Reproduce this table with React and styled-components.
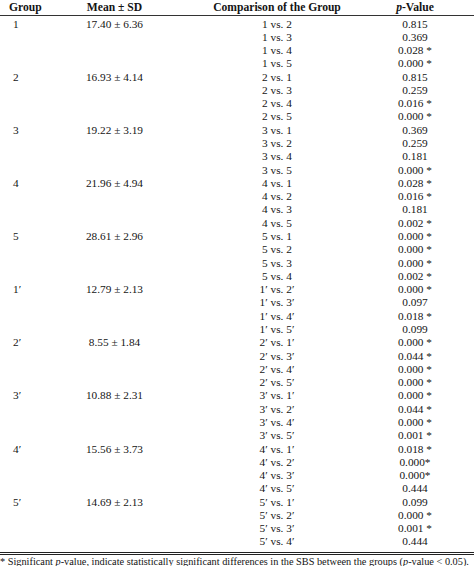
import styled, { createGlobalStyle } from 'styled-components';

const GlobalStyle = createGlobalStyle`
  html, body {
    margin: 0;
    padding: 0;
    background: #ffffff;
  }
  body {
    font-family: "Liberation Serif", "Times New Roman", serif;
    color: #141414;
  }
`;

const groups = [
  { id: '1', mean: '17.40 ± 6.36', rows: [['1 vs. 2', '0.815'], ['1 vs. 3', '0.369'], ['1 vs. 4', '0.028 *'], ['1 vs. 5', '0.000 *']] },
  { id: '2', mean: '16.93 ± 4.14', rows: [['2 vs. 1', '0.815'], ['2 vs. 3', '0.259'], ['2 vs. 4', '0.016 *'], ['2 vs. 5', '0.000 *']] },
  { id: '3', mean: '19.22 ± 3.19', rows: [['3 vs. 1', '0.369'], ['3 vs. 2', '0.259'], ['3 vs. 4', '0.181'], ['3 vs. 5', '0.000 *']] },
  { id: '4', mean: '21.96 ± 4.94', rows: [['4 vs. 1', '0.028 *'], ['4 vs. 2', '0.016 *'], ['4 vs. 3', '0.181'], ['4 vs. 5', '0.002 *']] },
  { id: '5', mean: '28.61 ± 2.96', rows: [['5 vs. 1', '0.000 *'], ['5 vs. 2', '0.000 *'], ['5 vs. 3', '0.000 *'], ['5 vs. 4', '0.002 *']] },
  { id: '1′', mean: '12.79 ± 2.13', rows: [['1′ vs. 2′', '0.000 *'], ['1′ vs. 3′', '0.097'], ['1′ vs. 4′', '0.018 *'], ['1′ vs. 5′', '0.099']] },
  { id: '2′', mean: '8.55 ± 1.84', rows: [['2′ vs. 1′', '0.000 *'], ['2′ vs. 3′', '0.044 *'], ['2′ vs. 4′', '0.000 *'], ['2′ vs. 5′', '0.000 *']] },
  { id: '3′', mean: '10.88 ± 2.31', rows: [['3′ vs. 1′', '0.000 *'], ['3′ vs. 2′', '0.044 *'], ['3′ vs. 4′', '0.000 *'], ['3′ vs. 5′', '0.001 *']] },
  { id: '4′', mean: '15.56 ± 3.73', rows: [['4′ vs. 1′', '0.018 *'], ['4′ vs. 2′', '0.000*'], ['4′ vs. 3′', '0.000*'], ['4′ vs. 5′', '0.444']] },
  { id: '5′', mean: '14.69 ± 2.13', rows: [['5′ vs. 1′', '0.099'], ['5′ vs. 2′', '0.000 *'], ['5′ vs. 3′', '0.001 *'], ['5′ vs. 4′', '0.444']] },
];

// Page

const Page = styled.div`
  width: 474px;
  height: 566px;
  overflow: hidden;
  display: flex;
  flex-direction: column;
`;

// Table rows

const TableRow = styled.div`
  display: grid;
  grid-template-columns: 58px 113px 212px 64px;
  padding-right: 27px;
  font-size: 11.3px;
  line-height: 13.28px;
  white-space: nowrap;
`;

const HeadRow = styled(TableRow)`
  height: 16px;
  line-height: 15px;
  font-size: 11.6px;
  font-weight: bold;
  border-bottom: 1px solid #333;
`;

const TableBody = styled.div`
  padding-top: 1.5px;
  padding-bottom: 3px;
  border-bottom: 3px double #222;
`;

const Cell = styled.div`
  text-align: ${({ $left }) => ($left ? 'left' : 'center')};
  padding-left: ${({ $left, $head }) => ($left ? ($head ? '9px' : '13px') : '0')};
`;

// Footnote

const Footnote = styled.div`
  font-size: 10.3px;
  line-height: 11px;
  padding-top: 1px;
  white-space: nowrap;
  letter-spacing: 0;
`;

const PLabel = ({ rest }) => (
  <>
    <i>p</i>
    {rest}
  </>
);

export default function App() {
  return (
    <Page>
      <GlobalStyle />
      <HeadRow>
        <Cell $left $head>Group</Cell>
        <Cell>Mean ± SD</Cell>
        <Cell>Comparison of the Group</Cell>
        <Cell>
          <PLabel rest="-Value" />
        </Cell>
      </HeadRow>
      <TableBody>
        {groups.map((g) =>
          g.rows.map(([cmp, p], i) => (
            <TableRow key={g.id + cmp}>
              <Cell $left>{i === 0 ? g.id : ''}</Cell>
              <Cell>{i === 0 ? g.mean : ''}</Cell>
              <Cell>{cmp}</Cell>
              <Cell>{p}</Cell>
            </TableRow>
          ))
        )}
      </TableBody>
      <Footnote>
        * Significant <PLabel rest="-value" />, indicate statistically significant differences in the SBS
        between the groups (<PLabel rest="-value" /> &lt; 0.05).
      </Footnote>
    </Page>
  );
}
